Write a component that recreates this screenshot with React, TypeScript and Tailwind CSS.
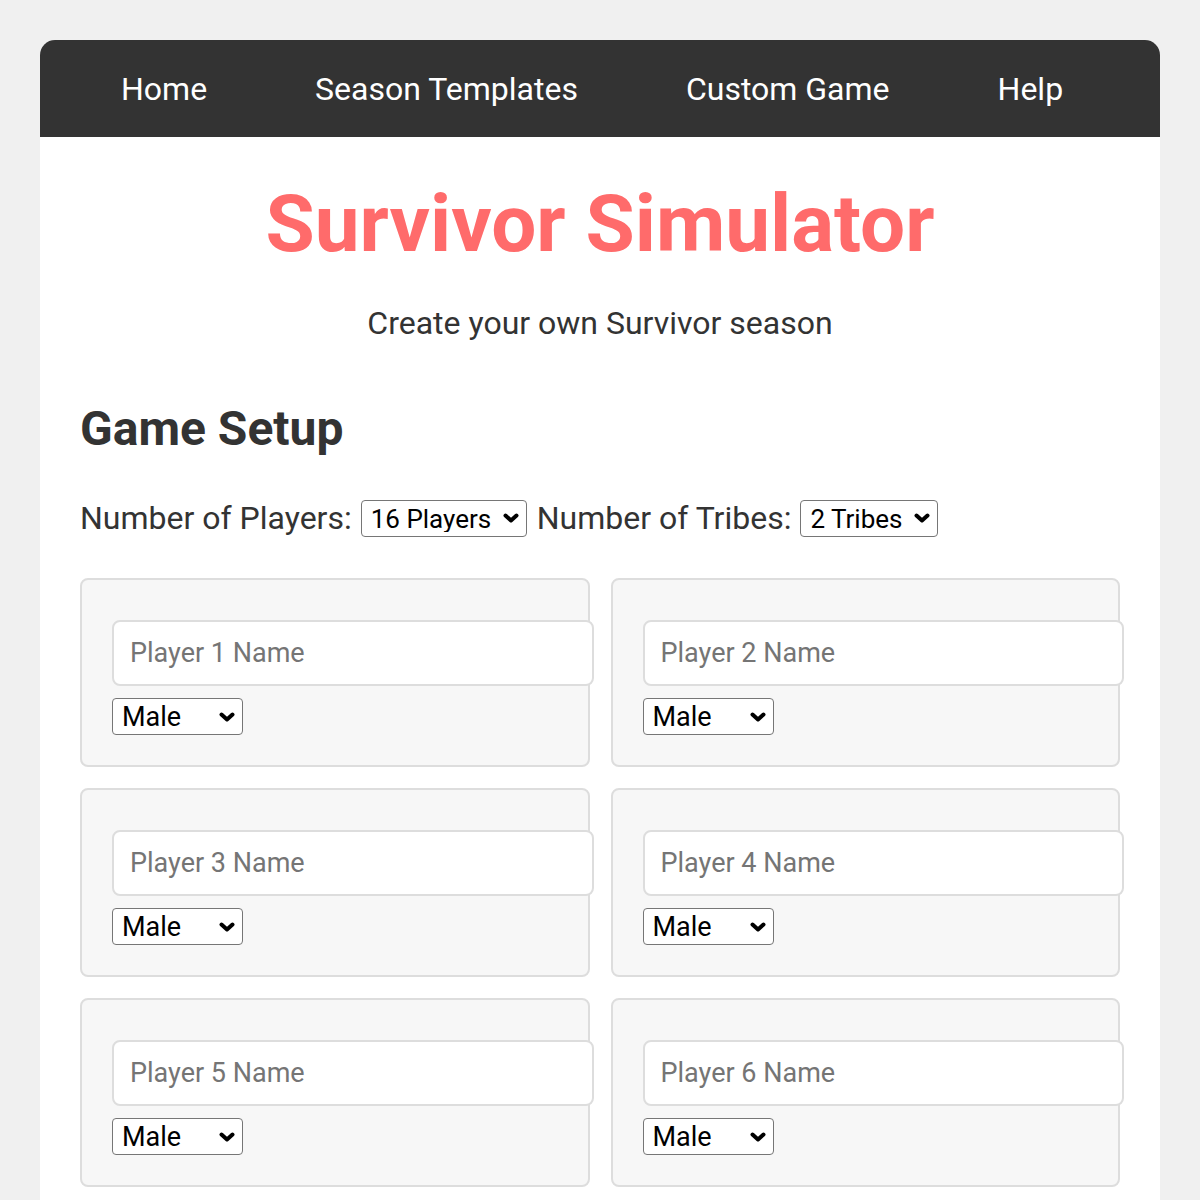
import { useState } from "react";

const navLinks = ["Home", "Season Templates", "Custom Game", "Help"];

function Chevron() {
  return (
    <svg
      viewBox="0 0 16 10"
      className="pointer-events-none absolute top-1/2 right-[8px] h-[10px] w-[16px] -translate-y-1/2"
      fill="none"
      stroke="black"
      strokeWidth="4"
      strokeLinecap="round"
      strokeLinejoin="round"
    >
      <path d="M2.5 2.5 L8 7.5 L13.5 2.5" />
    </svg>
  );
}

interface SelectProps {
  value: string;
  onChange: (v: string) => void;
  options: { value: string; label: string }[];
  className: string;
}

function Select({ value, onChange, options, className }: SelectProps) {
  return (
    <div className={`relative ${className}`}>
      <select
        value={value}
        onChange={(e) => onChange(e.target.value)}
        className="block h-full w-full appearance-none rounded-[4px] border-[1.5px] border-[#767676] bg-white pt-[2px] pl-[9px] leading-none text-black"
      >
        {options.map((o) => (
          <option key={o.value} value={o.value}>
            {o.label}
          </option>
        ))}
      </select>
      <Chevron />
    </div>
  );
}

function PlayerCard({ index }: { index: number }) {
  const [name, setName] = useState("");
  const [gender, setGender] = useState("Male");

  return (
    <div className="rounded-[8px] border-2 border-[#dddddd] bg-[#f7f7f7] px-[30px] pt-[40px] pb-[30px]">
      <input
        type="text"
        value={name}
        onChange={(e) => setName(e.target.value)}
        placeholder={`Player ${index} Name`}
        className="box-content block h-[32px] w-full rounded-[8px] border-2 border-[#dddddd] bg-white px-[16px] py-[15px] text-[27px] text-[#333] placeholder:text-[#757575] outline-none"
      />
      <Select
        value={gender}
        onChange={setGender}
        options={[
          { value: "Male", label: "Male" },
          { value: "Female", label: "Female" },
        ]}
        className="mt-[12px] h-[37px] w-[131px] text-[27px]"
      />
    </div>
  );
}

export default function App() {
  const [players, setPlayers] = useState("16");
  const [tribes, setTribes] = useState("2");

  return (
    <div className="min-h-screen bg-[#f0f0f0] px-[40px] pt-[40px] font-['Roboto',sans-serif]">
      <div className="overflow-hidden rounded-t-[15px] bg-white">
        {/* top navigation */}
        <nav className="flex h-[97px] items-center gap-[108px] bg-[#333333] pl-[81px]">
          {navLinks.map((link) => (
            <a key={link} href="#" className="text-[32px] text-white">
              {link}
            </a>
          ))}
        </nav>

        <main className="px-[40px] pb-[40px]">
          <h1 className="mt-[40px] text-center text-[80px] leading-[94px] font-bold text-[#ff6b6b]">
            Survivor Simulator
          </h1>
          <p className="mt-[34px] text-center text-[32px] leading-[36px] text-[#333333]">
            Create your own Survivor season
          </p>

          <h2 className="mt-[60px] text-[48px] leading-[56px] font-bold text-[#333333]">
            Game Setup
          </h2>

          <div className="mt-[41px] flex items-center text-[32px] leading-[40px] text-[#333333]">
            <label>Number of Players:</label>
            <Select
              value={players}
              onChange={setPlayers}
              options={[
                { value: "16", label: "16 Players" },
                { value: "18", label: "18 Players" },
                { value: "20", label: "20 Players" },
              ]}
              className="ml-[9px] h-[37px] w-[166px] text-[26px]"
            />
            <label className="ml-[10px]">Number of Tribes:</label>
            <Select
              value={tribes}
              onChange={setTribes}
              options={[
                { value: "2", label: "2 Tribes" },
                { value: "3", label: "3 Tribes" },
              ]}
              className="ml-[9px] h-[37px] w-[138px] text-[26px]"
            />
          </div>

          <div className="mt-[40px] grid grid-cols-2 gap-[21px]">
            {[1, 2, 3, 4, 5, 6, 7, 8].map((n) => (
              <PlayerCard key={n} index={n} />
            ))}
          </div>
        </main>
      </div>
    </div>
  );
}
